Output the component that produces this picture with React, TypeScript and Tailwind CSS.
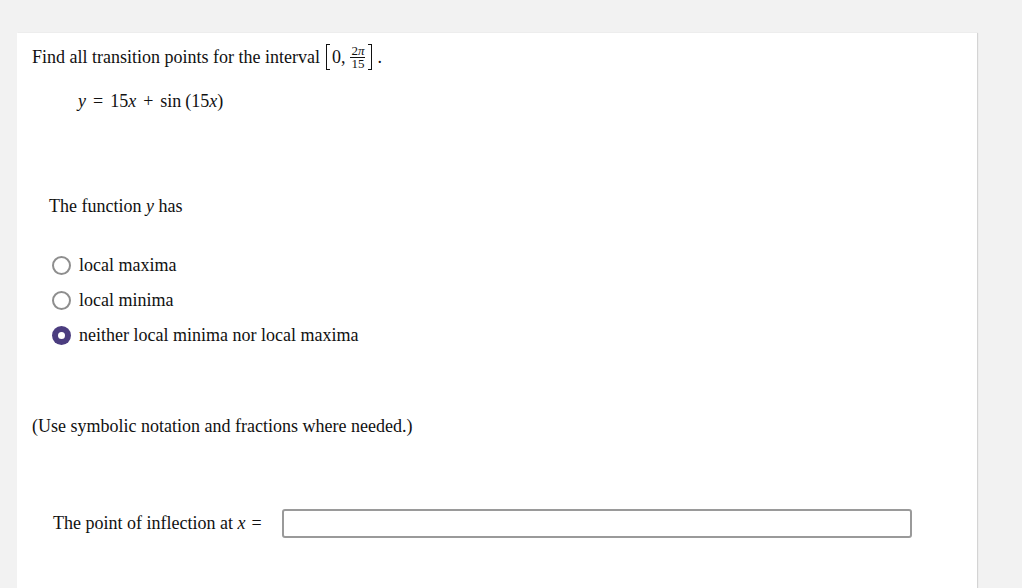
import { useState } from "react";

const options = [
  "local maxima",
  "local minima",
  "neither local minima nor local maxima",
];

function Radio({ checked }: { checked: boolean }) {
  return checked ? (
    <span className="flex h-[19px] w-[19px] items-center justify-center rounded-full bg-[#4b3d7f]">
      <span className="h-[7px] w-[7px] rounded-full bg-white" />
    </span>
  ) : (
    <span className="h-[19px] w-[19px] rounded-full border-2 border-[#8e8e8e] bg-white" />
  );
}

export default function App() {
  const [picked, setPicked] = useState(2);
  const [answer, setAnswer] = useState("");

  return (
    <div className="min-h-[588px] bg-[#f2f2f2] pt-[33px] pl-[17px] font-['Liberation_Serif',serif] text-[18px] text-[#111]">
      <div className="min-h-[555px] w-[960px] bg-white pt-[9px] shadow-[1px_0_1px_rgba(0,0,0,0.12)]">
        <div className="flex h-[30px] items-center pl-[15px]">
          <span>Find all transition points for the interval</span>
          <span className="ml-[6px] flex items-center">
            {/* thin tall brackets, like the math renderer draws them */}
            <span className="mr-[2px] h-[26px] w-[4px] border-y border-l border-[#111]" />
            <span>0,</span>
            <span className="ml-[5px] mr-[3px] flex flex-col items-center text-[13px] leading-[12px]">
              <span className="px-[1px]">
                2<i>π</i>
              </span>
              <span className="border-t border-[#111] px-[1px]">15</span>
            </span>
            <span className="h-[26px] w-[4px] border-y border-r border-[#111]" />
          </span>
          <span className="ml-[5px]">.</span>
        </div>

        <div className="mt-[16px] pl-[61px]">
          <i>y</i>
          <span className="mx-[7px]">=</span>15<i>x</i>
          <span className="mx-[7px]">+</span>sin<span className="ml-[4px]">(</span>15<i>x</i>)
        </div>

        <div className="mt-[78px] pl-[32px]">
          The function <i>y</i> has
        </div>

        <div className="mt-[35px] flex flex-col gap-[15px] pl-[35px]">
          {options.map((o, i) => (
            <label
              key={o}
              className="flex h-[20px] cursor-pointer items-center gap-[8px]"
              onClick={() => setPicked(i)}
            >
              <Radio checked={picked === i} />
              <span>{o}</span>
            </label>
          ))}
        </div>

        <div className="mt-[68px] pl-[15px]">
          (Use symbolic notation and fractions where needed.)
        </div>

        <div className="mt-[69px] flex items-center pl-[36px]">
          <span>
            The point of inflection at <i>x</i>
            <span className="ml-[6px]">=</span>
          </span>
          <input
            value={answer}
            onChange={(e) => setAnswer(e.target.value)}
            className="ml-[20px] h-[29px] w-[630px] rounded-[3px] border-2 border-[#9a9a9a] bg-white px-2 outline-none"
          />
        </div>
      </div>
    </div>
  );
}
